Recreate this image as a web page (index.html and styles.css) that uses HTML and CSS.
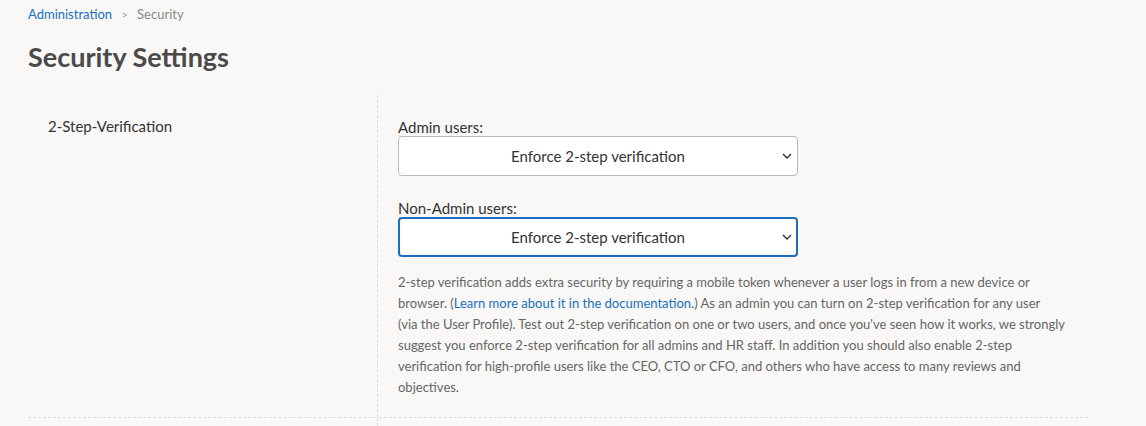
FILE: index.html
```html
<!DOCTYPE html>
<html lang="en">
<head>
    <meta charset="UTF-8">
    <meta name="viewport" content="width=device-width, initial-scale=1.0">
    <title>Security Settings</title>
    <link rel="stylesheet" href="styles.css">
</head>
<body>
    <div class="page">
        <div class="breadcrumb">
            <a href="#">Administration</a>
            <span class="sep">&gt;</span>
            <span class="current">Security</span>
        </div>

        <h1 class="title">Security Settings</h1>

        <div class="setting-row">
            <div class="setting-label">2-Step-Verification</div>
            <div class="setting-body">
                <div class="field">
                    <label class="field-label">Admin users:</label>
                    <div class="select-wrap">
                        <select class="select">
                            <option>Enforce 2-step verification</option>
                            <option>Optional</option>
                        </select>
                        <svg class="chevron" width="10" height="6" viewBox="0 0 10 6"><path d="M1 1l4 4 4-4" fill="none" stroke="#333" stroke-width="1.4"/></svg>
                    </div>
                </div>

                <div class="field">
                    <label class="field-label">Non-Admin users:</label>
                    <div class="select-wrap">
                        <select class="select focused">
                            <option>Enforce 2-step verification</option>
                            <option>Optional</option>
                        </select>
                        <svg class="chevron" width="10" height="6" viewBox="0 0 10 6"><path d="M1 1l4 4 4-4" fill="none" stroke="#333" stroke-width="1.4"/></svg>
                    </div>
                </div>

                <p class="help">
                    2-step verification adds extra security by requiring a mobile token whenever a user logs in from a new device or<br>
                    browser. (<a href="#">Learn more about it in the documentation.</a>) As an admin you can turn on 2-step verification for any user<br>
                    (via the User Profile). Test out 2-step verification on one or two users, and once you've seen how it works, we strongly<br>
                    suggest you enforce 2-step verification for all admins and HR staff. In addition you should also enable 2-step<br>
                    verification for high-profile users like the CEO, CTO or CFO, and others who have access to many reviews and<br>
                    objectives.
                </p>
            </div>
        </div>

        <!-- next section continues below the fold -->
        <div class="setting-row">
            <div class="setting-label empty"></div>
            <div class="setting-body"></div>
        </div>
    </div>
</body>
</html>
```

FILE: styles.css
```css
body {
    margin: 0;
    background-color: #f9f8f7;
    font-family: Lato, "Noto Sans", sans-serif;
    color: #333;
}

.page {
    padding: 5px 58px 0 28px;
}

.breadcrumb {
    font-size: 13px;
    line-height: 18px;
    color: #888;
}

.breadcrumb a {
    color: #1a6fc0;
    text-decoration: none;
}

.breadcrumb .sep {
    color: #aaa;
    font-size: 11px;
    margin: 0 6px;
}

.title {
    font-size: 27px;
    font-weight: 700;
    color: #4a4a4a;
    margin: 18px 0 23px 0;
    line-height: 30px;
}

.setting-row {
    display: flex;
    border-bottom: 1px dashed #dddddd;
}

.setting-label {
    width: 329px;
    padding: 22px 0 0 20px;
    font-size: 15px;
    line-height: 19px;
    border-right: 1px dashed #dddddd;
}

.setting-label.empty {
    min-height: 60px;
}

.setting-body {
    flex: 1;
    padding: 23px 0 19px 20px;
}

.field + .field {
    margin-top: 23px;
}

.field-label {
    display: block;
    font-size: 15px;
    line-height: 18px;
}

.select-wrap {
    position: relative;
    width: 400px;
}

.select {
    appearance: none;
    -webkit-appearance: none;
    width: 100%;
    height: 40px;
    border: 1px solid #bbb;
    border-radius: 4px;
    background: white;
    font-family: inherit;
    font-size: 15px;
    color: #333;
    text-align: center;
    text-align-last: center;
    padding: 0 24px;
}

.select.focused {
    border: 2px solid #1a6fc0;
}

.chevron {
    position: absolute;
    right: 6px;
    top: 17px;
}

.help {
    max-width: 700px;
    margin: 15px 0 0 0;
    font-size: 13px;
    line-height: 21px;
    color: #666;
}

.help a {
    color: #1a6fc0;
    text-decoration: none;
}
```
